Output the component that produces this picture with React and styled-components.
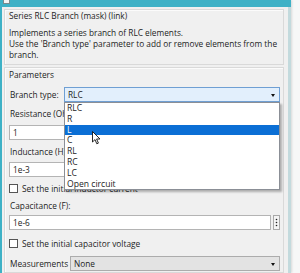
import React from "react";
import styled, { createGlobalStyle } from "styled-components";

const GlobalStyle = createGlobalStyle`
  html, body {
    margin: 0;
    padding: 0;
    background: #f6f7f7;
  }
  body {
    font-family: "Open Sans", "Segoe UI", sans-serif;
    font-size: 8.3px;
    color: #1d1d1d;
  }
`;

const Window = styled.div`
  position: relative;
  display: flex;
  flex-direction: column;
  width: 291px;
  height: 273px;
  overflow: hidden;
  box-shadow: 1px 0 2px rgba(0, 0, 0, 0.12);
`;

const TitleBar = styled.div`
  position: relative;
  height: 7px;
  flex: none;
  background: #3eb1c6;
`;

const TitleIcon = styled.div`
  position: absolute;
  left: 3px;
  top: -3px;
  width: 5px;
  height: 5px;
  background: #f4f4f4;
  border: 1px solid #7a8a8c;
`;

const Frame = styled.div`
  flex: 1;
  display: flex;
  flex-direction: column;
  background: #f0f0f0;
  border-left: 2px solid #3eb1c6;
  border-right: 3px solid #c3dadd;
  padding-top: 1px;
`;

const GroupBox = styled.div`
  margin: ${p => p.$top || 0}px 4px 0 2px;
  padding: ${p => p.$padTop || 0}px 3px ${p => p.$padBottom || 0}px 4px;
  border: 1px solid #d9d9d9;
  box-shadow: inset 1px 1px 0 #fbfbfb;
  flex: ${p => (p.$grow ? 1 : "none")};
`;

const BoxTitle = styled.div`
  line-height: 12px;
  height: 12px;
  white-space: nowrap;
`;

const Description = styled.div`
  margin-top: 5px;
  line-height: 11px;
  white-space: nowrap;
`;

const Row = styled.div`
  position: relative;
  display: flex;
  align-items: center;
  margin-top: ${p => p.$top || 0}px;
  height: ${p => p.$height || 12}px;
`;

const RowLabel = styled.div`
  flex: none;
  width: ${p => p.$width}px;
  padding-left: 1px;
  box-sizing: border-box;
  white-space: nowrap;
`;

const Label = styled.div`
  margin-top: ${p => p.$top || 0}px;
  padding-left: 1px;
  line-height: 12px;
  height: 12px;
  white-space: nowrap;
`;

const Select = styled.div`
  position: relative;
  flex: 1;
  height: 15px;
  box-sizing: border-box;
  display: flex;
  align-items: center;
  padding-left: 3px;
  background: ${p => (p.$focused ? "#e2effc" : "#e3e3e3")};
  border: 1px solid ${p => (p.$focused ? "#6f9fd3" : "#acacac")};
`;

const Arrow = styled.span`
  position: absolute;
  right: 4px;
  top: 6px;
  width: 0;
  height: 0;
  border-left: 2.5px solid transparent;
  border-right: 2.5px solid transparent;
  border-top: 3px solid #111;
`;

const List = styled.ul`
  position: absolute;
  top: 100%;
  left: ${p => p.$left}px;
  right: 0;
  margin: 0;
  padding: 0;
  list-style: none;
  background: #fff;
  border: 1px solid #8b8f96;
  box-shadow: 2px 2px 2px rgba(0, 0, 0, 0.28);
  z-index: 2;
  font-size: 8.6px;
`;

const Item = styled.li`
  height: 10.8px;
  line-height: 10.8px;
  padding-left: 2px;
  background: ${p => (p.$active ? "#0b6fd5" : "transparent")};
  color: ${p => (p.$active ? "#fff" : "#1d1d1d")};
`;

const InputRow = styled.div`
  display: flex;
  align-items: stretch;
  gap: 2px;
  height: 15px;
  margin-top: ${p => p.$top || 0}px;
`;

const TextInput = styled.div`
  flex: 1;
  box-sizing: border-box;
  display: flex;
  align-items: center;
  padding-left: 3px;
  background: #fff;
  border: 1px solid #b4b4b4;
`;

const MoreButton = styled.div`
  width: 7px;
  box-sizing: border-box;
  display: flex;
  align-items: center;
  justify-content: center;
  background: #f4f4f4;
  border: 1px solid #a9a9a9;
`;

const CheckRow = styled.label`
  display: flex;
  align-items: center;
  gap: 4px;
  height: 12px;
  margin-top: ${p => p.$top || 0}px;
  white-space: nowrap;
`;

const CheckBox = styled.span`
  width: 9px;
  height: 9px;
  box-sizing: border-box;
  background: #fff;
  border: 1px solid #555;
`;

const Cursor = styled.svg`
  position: absolute;
  left: 92px;
  top: 131px;
  z-index: 3;
`;

const branchTypes = ["RLC", "R", "L", "C", "RL", "RC", "LC", "Open circuit"];

const Dots = () => (
  <svg width="3" height="9" viewBox="0 0 3 9">
    <circle cx="1.5" cy="1.5" r="0.8" fill="#222" />
    <circle cx="1.5" cy="4.5" r="0.8" fill="#222" />
    <circle cx="1.5" cy="7.5" r="0.8" fill="#222" />
  </svg>
);

const ValueField = ({ value, top }) => (
  <InputRow $top={top}>
    <TextInput>{value}</TextInput>
    <MoreButton>
      <Dots />
    </MoreButton>
  </InputRow>
);

export default function App() {
  return (
    <>
      <GlobalStyle />
      <Window>
        <TitleBar>
          <TitleIcon />
        </TitleBar>
        <Frame>
          <GroupBox $top={1} $padBottom={4}>
            <BoxTitle>Series RLC Branch (mask) (link)</BoxTitle>
            <Description>
              Implements a series branch of RLC elements.
              <br />
              Use the 'Branch type' parameter to add or remove elements from the
              <br />
              branch.
            </Description>
          </GroupBox>

          <GroupBox $top={2} $padTop={1} $grow>
            <BoxTitle>Parameters</BoxTitle>
            <Row $top={6} $height={15}>
              <RowLabel $width={55}>Branch type:</RowLabel>
              <Select $focused>
                RLC
                <Arrow />
              </Select>
              <List $left={55}>
                {branchTypes.map(t => (
                  <Item key={t} $active={t === "L"}>
                    {t}
                  </Item>
                ))}
              </List>
            </Row>

            <Label $top={6}>Resistance (Ohms):</Label>
            <ValueField value="1" top={5} />

            <Label $top={6}>Inductance (H):</Label>
            <ValueField value="1e-3" top={4} />

            <CheckRow $top={5}>
              <CheckBox />
              Set the initial inductor current
            </CheckRow>

            <Label $top={6}>Capacitance (F):</Label>
            <ValueField value="1e-6" top={3} />

            <CheckRow $top={7}>
              <CheckBox />
              Set the initial capacitor voltage
            </CheckRow>

            <Row $top={7} $height={15}>
              <RowLabel $width={61}>Measurements</RowLabel>
              <Select>
                None
                <Arrow />
              </Select>
            </Row>
          </GroupBox>
        </Frame>

        <Cursor width="9" height="14" viewBox="0 0 9 14">
          <path
            d="M0.5 0.5 L0.5 11 L3 8.6 L4.8 12.8 L6.4 12.1 L4.6 8 L8 8 Z"
            fill="#fff"
            stroke="#111"
            strokeWidth="0.9"
            strokeLinejoin="round"
          />
        </Cursor>
      </Window>
    </>
  );
}
